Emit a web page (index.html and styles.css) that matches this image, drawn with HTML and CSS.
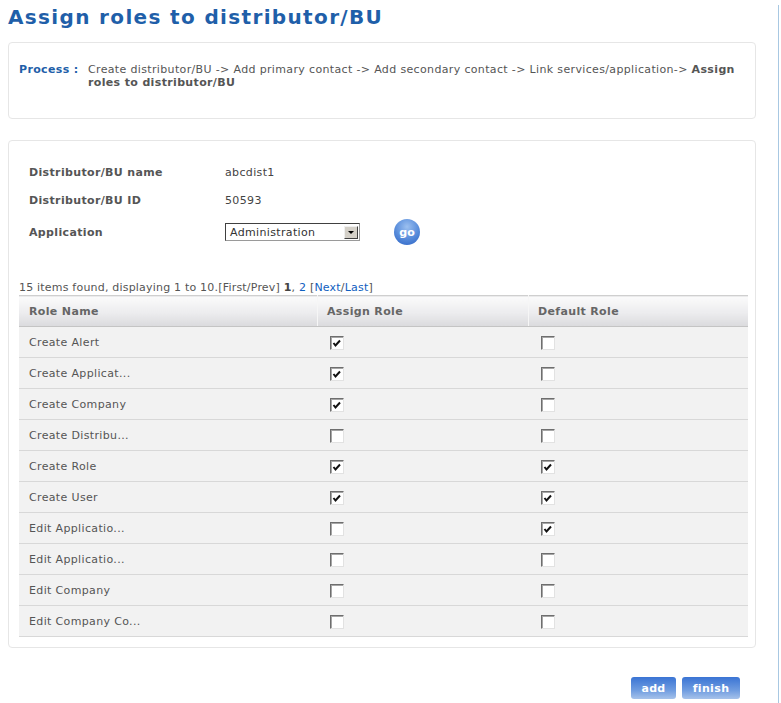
FILE: index.html
```html
<!DOCTYPE html>
<html lang="en">
<head>
    <meta charset="UTF-8">
    <title>Assign roles to distributor/BU</title>
    <link rel="stylesheet" href="styles.css">
</head>
<body>
<div class="page">
    <h1>Assign roles to distributor/BU</h1>

    <div class="box process">
        <span class="processLabel">Process :</span>
        <span class="processSteps">Create distributor/BU -&gt; Add primary contact -&gt; Add secondary contact -&gt; Link services/application-&gt; <b>Assign roles to distributor/BU</b></span>
    </div>

    <div class="box details">
        <div class="info">
            <div class="infoRow">
                <span class="infoLabel">Distributor/BU name</span>
                <span class="infoValue">abcdist1</span>
            </div>
            <div class="infoRow">
                <span class="infoLabel">Distributor/BU ID</span>
                <span class="infoValue">50593</span>
            </div>
            <div class="infoRow tall">
                <span class="infoLabel">Application</span>
                <span class="infoValue">
                    <span class="select">
                        <span class="selectText">Administration</span>
                        <span class="selectArrow"></span>
                    </span>
                    <span class="goBtn">go</span>
                </span>
            </div>
        </div>

        <div class="paging">15 items found, displaying 1 to 10.[First/Prev] <b>1</b>, <a>2</a> [<a>Next</a>/<a>Last</a>]</div>

        <table class="roles">
            <thead>
                <tr><th class="colName">Role Name</th><th class="colAssign">Assign Role</th><th>Default Role</th></tr>
            </thead>
            <tbody id="rolesBody"></tbody>
        </table>
    </div>

    <div class="actions">
        <span class="btn btnAdd">add</span>
        <span class="btn btnFinish">finish</span>
    </div>
</div>

<script>
    const roles = [
        { name: "Create Alert", assign: true, def: false },
        { name: "Create Applicat...", assign: true, def: false },
        { name: "Create Company", assign: true, def: false },
        { name: "Create Distribu...", assign: false, def: false },
        { name: "Create Role", assign: true, def: true },
        { name: "Create User", assign: true, def: true },
        { name: "Edit Applicatio...", assign: false, def: true },
        { name: "Edit Applicatio...", assign: false, def: false },
        { name: "Edit Company", assign: false, def: false },
        { name: "Edit Company Co...", assign: false, def: false }
    ];

    const tick = '<svg width="9" height="9" viewBox="0 0 9 9"><polyline points="1.5,4 3.5,6.5 8,1.5" fill="none" stroke="#111" stroke-width="2"/></svg>';

    function box(on) {
        return '<span class="cb">' + (on ? tick : '') + '</span>';
    }

    let body = document.getElementById('rolesBody');
    roles.forEach(role => {
        let tr = document.createElement('tr');
        tr.innerHTML = `<td>${role.name}</td><td>${box(role.assign)}</td><td>${box(role.def)}</td>`;
        body.appendChild(tr);
    });
</script>
</body>
</html>
```

FILE: styles.css
```css
html, body {
    margin: 0;
    background: #fff;
}
body {
    font-family: Verdana, "DejaVu Sans", sans-serif;
    font-size: 11px;
    letter-spacing: 0.35px;
    color: #555;
}
.page {
    width: 779px;
    min-height: 703px;
    box-sizing: border-box;
    border-right: 1px solid #a8c8e2;
    padding: 0 22px 0 8px;
}
h1 {
    margin: 5px 0 13px;
    font-size: 20px;
    line-height: 24px;
    color: #1f5fa9;
    letter-spacing: 1.35px;
}
.box {
    border: 1px solid #e6e6e6;
    border-radius: 4px;
    background: #fff;
}

/* Process box */
.process {
    display: flex;
    padding: 20px 10px 29px;
    line-height: 13px;
    margin-bottom: 21px;
}
.processLabel {
    flex: 0 0 69px;
    font-weight: bold;
    color: #1f5fa9;
}
.processSteps b {
    color: #555;
}

/* Details */
.details {
    padding: 17px 8px 10px 10px;
}
.info {
    padding-left: 10px;
}
.infoRow {
    display: flex;
    align-items: center;
    height: 28px;
}
.infoRow.tall {
    height: 36px;
}
.infoLabel {
    flex: 0 0 196px;
    font-weight: bold;
}
.infoValue {
    display: flex;
    align-items: center;
    color: #444;
}
.select {
    display: flex;
    align-items: center;
    justify-content: space-between;
    width: 135px;
    height: 18px;
    box-sizing: border-box;
    border: 1px solid #333;
    border-color: #404040 #9a9a9a #9a9a9a #404040;
    padding: 0 1px 0 4px;
    color: #333;
}
.selectArrow {
    width: 14px;
    height: 13px;
    box-sizing: border-box;
    background: #d4d0c8;
    border: 1px solid;
    border-color: #f0f0f0 #404040 #404040 #f0f0f0;
    position: relative;
}
.selectArrow::after {
    content: "";
    position: absolute;
    left: 3px;
    top: 4px;
    border-left: 3px solid transparent;
    border-right: 3px solid transparent;
    border-top: 3px solid #000;
}
.goBtn {
    width: 26px;
    height: 26px;
    margin-left: 34px;
    border-radius: 50%;
    background: radial-gradient(circle at 50% 30%, #9cc0f0 0%, #5b8fdc 50%, #2a61c4 100%);
    color: #fff;
    font-weight: bold;
    letter-spacing: 0;
    display: flex;
    align-items: center;
    justify-content: center;
}

.paging {
    margin-top: 31px;
    line-height: 13px;
    letter-spacing: 0.2px;
    color: #555;
}
.paging b {
    color: #444;
}
.paging a {
    color: #1060c0;
}

/* Roles table */
.roles {
    width: 729px;
    border-collapse: collapse;
    border-top: 1px solid #cfcfcf;
    margin-top: 1px;
}
.roles th {
    height: 30px;
    padding: 0 0 0 9px;
    text-align: left;
    font-weight: bold;
    color: #666;
    background: linear-gradient(#fbfbfb, #ececee 55%, #dadadd);
    border-bottom: 1px solid #c4c4c4;
    border-left: 1px solid #f6f6f6;
}
.roles th:first-child {
    border-left: none;
    padding-left: 10px;
}
.colName {
    width: 288px;
}
.colAssign {
    width: 201px;
}
.roles td {
    height: 30px;
    padding: 0 0 0 9px;
    background: #f2f2f2;
    border-bottom: 1px solid #d8d8d8;
    color: #555;
}
.roles td:first-child {
    padding-left: 10px;
}
.cb {
    display: inline-flex;
    align-items: center;
    justify-content: center;
    width: 12px;
    height: 12px;
    margin: 2px 0 0 3px;
    vertical-align: middle;
    background: #fff;
    border: 1px solid;
    border-color: #6e6e6e #e2e2e2 #e2e2e2 #6e6e6e;
    box-shadow: inset 1px 1px 0 #a6a6a6;
}

/* Bottom buttons */
.actions {
    display: flex;
    justify-content: flex-end;
    gap: 6px;
    margin: 29px 16px 0 0;
}
.btn {
    height: 22px;
    display: flex;
    align-items: center;
    justify-content: center;
    border-radius: 3px;
    background: linear-gradient(#3a74d4, #6f9ce0 60%, #a6c2ea);
    color: #fff;
    font-weight: bold;
}
.btnAdd {
    width: 45px;
}
.btnFinish {
    width: 58px;
}
```
